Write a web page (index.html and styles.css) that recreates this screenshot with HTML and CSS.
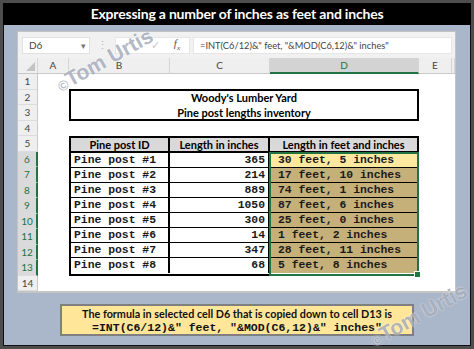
FILE: index.html
```html
<!DOCTYPE html>
<html>
<head>
<meta charset="utf-8">
<title>Expressing a number of inches as feet and inches</title>
<link rel="stylesheet" href="styles.css">
</head>
<body>
<div class="frame">
  <div class="title">Expressing a number of inches as feet and inches</div>

  <div class="window">
    <div class="fbar">
      <div class="namebox">D6<span class="caret">&#9662;</span></div>
      <div class="dots">&#8942;</div>
      <div class="fxbox"><span class="tick">&#10003;</span><span class="fx">f<sub>x</sub></span></div>
      <div class="formula">=INT(C6/12)&amp;" feet, "&amp;MOD(C6,12)&amp;" inches"</div>
    </div>

    <div class="grid">
      <!--column headers-->
      <div class="ch corner"></div>
      <div class="ch">A</div>
      <div class="ch">B</div>
      <div class="ch">C</div>
      <div class="ch on">D</div>
      <div class="ch">E</div>
      <div class="ch"></div>
      <!--row headers-->
      <div class="rh">1</div>
      <div class="rh">2</div>
      <div class="rh">3</div>
      <div class="rh">4</div>
      <div class="rh">5</div>
      <div class="rh on">6</div>
      <div class="rh on">7</div>
      <div class="rh on">8</div>
      <div class="rh on">9</div>
      <div class="rh on">10</div>
      <div class="rh on">11</div>
      <div class="rh on">12</div>
      <div class="rh on">13</div>
      <div class="rh">14</div>

      <div class="banner">
        <p>Woody's Lumber Yard</p>
        <p>Pine post lengths inventory</p>
      </div>

      <div class="tbl">
        <div class="th">Pine post ID</div>
        <div class="th">Length in inches</div>
        <div class="th">Length in feet and inches</div>

        <div class="td">Pine post #1</div><div class="td num">365</div><div class="td ft first">30 feet, 5 inches</div>
        <div class="td">Pine post #2</div><div class="td num">214</div><div class="td ft">17 feet, 10 inches</div>
        <div class="td">Pine post #3</div><div class="td num">889</div><div class="td ft">74 feet, 1 inches</div>
        <div class="td">Pine post #4</div><div class="td num">1050</div><div class="td ft">87 feet, 6 inches</div>
        <div class="td">Pine post #5</div><div class="td num">300</div><div class="td ft">25 feet, 0 inches</div>
        <div class="td">Pine post #6</div><div class="td num">14</div><div class="td ft">1 feet, 2 inches</div>
        <div class="td">Pine post #7</div><div class="td num">347</div><div class="td ft">28 feet, 11 inches</div>
        <div class="td">Pine post #8</div><div class="td num">68</div><div class="td ft">5 feet, 8 inches</div>
      </div>

      <div class="selection"></div>
    </div>
  </div>

  <div class="note">
    <p>The formula in selected cell D6 that is copied down to cell D13 is</p>
    <p class="code">=INT(C6/12)&amp;" feet, "&amp;MOD(C6,12)&amp;" inches"</p>
  </div>

  <div class="wm wm1"><small>&copy;</small>Tom Urtis</div>
  <div class="wm wm2"><small>&copy;</small>Tom Urtis</div>
</div>
</body>
</html>
```

FILE: styles.css
```css
html, body, div, p { margin:0; padding:0; }
body { background:#4d4d4d; font-family:"Lato", "Open Sans", sans-serif; }

.frame { width:474px; height:349px; box-sizing:border-box; border:3px solid #4d4d4d; box-shadow:inset 0 0 0 1px #111; background:#aab6c9; position:relative; overflow:hidden; }

.title { height:22px; background:#000; color:#fff; font-weight:bold; font-size:14px; letter-spacing:-0.2px; line-height:21px; text-align:center; }

/* excel window */
.window { margin:6px 15px 0 14px; border:1px solid #c4c4c4; border-bottom-width:2px; background:#f1f1f1; }
.fbar { height:26px; display:flex; align-items:center; padding:0 3px 0 4px; font-size:10px; color:#444; }
.namebox { width:68px; height:17px; box-sizing:border-box; background:#fff; border:1px solid #e0e0e0; display:flex; align-items:center; justify-content:space-between; padding:0 3px 0 6px; }
.caret { font-size:9px; color:#777; }
.dots { width:25px; text-align:center; color:#b4b4b4; font-size:11px; }
.fxbox { width:75px; height:17px; box-sizing:border-box; background:#fff; border:1px solid #e6e6e6; display:flex; align-items:center; justify-content:flex-end; gap:14px; padding-right:9px; }
.tick { color:#c8c8c8; font-size:11px; }
.fx { font-family:"Liberation Serif", serif; font-style:italic; font-size:11px; color:#555; }
.fx sub { font-size:7px; }
.formula { flex:1; height:17px; box-sizing:border-box; margin-left:3px; background:#fff; border:1px solid #e6e6e6; padding-left:6px; font-size:9.3px; line-height:15px; white-space:nowrap; overflow:hidden; }

.grid { display:grid; grid-template-columns:20px 31px 101px 100px 149px 33px 1fr; grid-template-rows:16px repeat(14, 15.5px); background:#fff; font-size:10px; color:#444; }
.ch { background:#efefef; border-right:1px solid #d5d5d5; border-bottom:1px solid #c8c8c8; text-align:center; line-height:15px; }
.ch.on { background:#d3d3d3; color:#217346; border-bottom:2px solid #217346; line-height:14px; }
.corner { position:relative; }
.corner:after { content:""; position:absolute; right:2px; bottom:2px; border-style:solid; border-width:0 0 9px 9px; border-color:transparent transparent #c3c3c3 transparent; }
.rh { grid-column:1; background:#efefef; border-right:1px solid #c8c8c8; border-bottom:1px solid #dcdcdc; text-align:center; line-height:15px; }
.rh.on { background:#dadada; color:#217346; border-right:2px solid #217346; }

.banner { grid-column:3 / 6; grid-row:3 / 5; border:2px solid #000; margin-top:-1px; display:flex; flex-direction:column; justify-content:center; text-align:center; font-weight:bold; font-size:11px; line-height:15px; color:#000; }

.tbl { grid-column:3 / 6; grid-row:6 / 15; border:2px solid #000; display:grid; grid-template-columns:99px 100px 1fr; grid-template-rows:repeat(9, 1fr); color:#000; }
.th, .td { border-right:2px solid #000; border-bottom:1px solid #000; overflow:hidden; white-space:nowrap; }
.tbl > div:nth-child(3n) { border-right:0; }
.tbl > div:nth-last-child(-n+3) { border-bottom:0; }
.th { background:#d9d9d9; font-weight:bold; font-size:11px; text-align:center; line-height:14px; border-bottom-width:2px; }
.td { font-family:"Liberation Mono", "Courier New", monospace; font-weight:bold; font-size:11.4px; line-height:14px; padding:0 3px; color:#1a1a1a; }
.td.num { text-align:right; }
.td.ft { background:#c6b07a; padding-left:8px; }
.td.ft.first { background:#fde8a0; }

.selection { grid-column:5; grid-row:7 / 15; border:2px solid #217346; margin-left:-1px; position:relative; pointer-events:none; }
.selection:after { content:""; position:absolute; right:-4px; bottom:-4px; width:5px; height:5px; background:#217346; border:1px solid #fff; }

/* note */
.note { margin:11px 0 0 57px; width:354px; height:32px; box-sizing:border-box; border:2px solid #7f7f7f; background:#ffe699; text-align:center; font-weight:bold; font-size:10.8px; line-height:14px; color:#111; padding-top:1px; }
.note .code { font-family:"Liberation Mono", "Courier New", monospace; font-size:11.5px; }

/* watermark */
.wm { position:absolute; width:112px; text-align:center; line-height:24px; font-family:"Liberation Sans", Arial, sans-serif; font-weight:bold; font-size:21px; color:rgba(128,138,158,0.62); text-shadow:0 0 2px rgba(255,255,255,0.85); transform:rotate(-29deg); white-space:nowrap; }
.wm small { font-size:14px; }
.wm1 { left:46px; top:45px; }
.wm2 { left:360px; top:300px; }
```
